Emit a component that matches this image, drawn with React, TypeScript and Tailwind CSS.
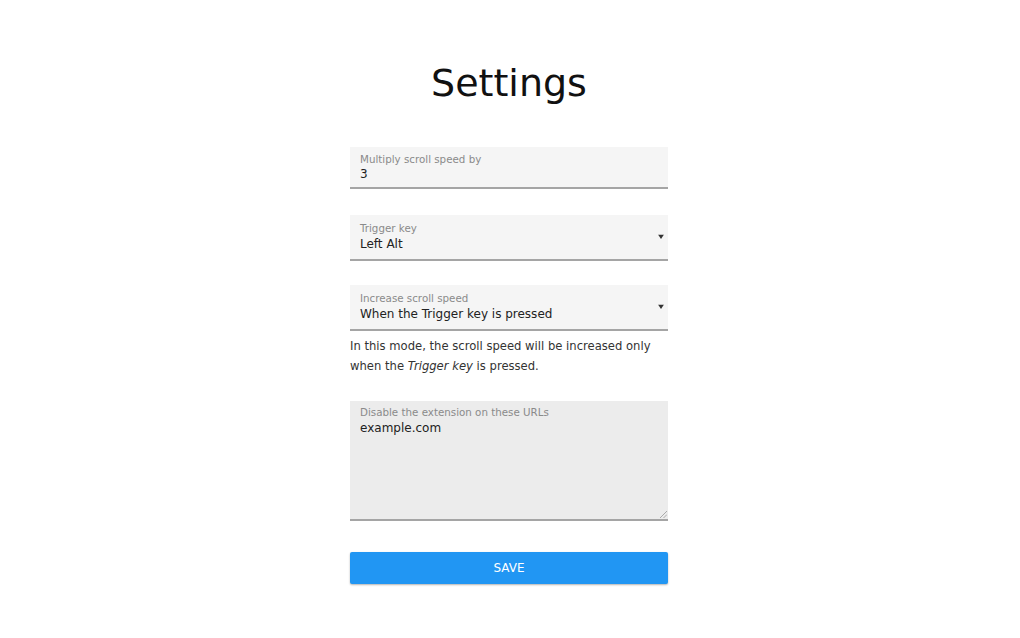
import React from "react";

function Arrow() {
  return (
    <svg width="6" height="5" viewBox="0 0 6 5" className="absolute right-[4px] top-1/2 -translate-y-1/2">
      <path d="M0 0 L6 0 L3 4.5 Z" fill="#333" />
    </svg>
  );
}

export default function App() {
  return (
    <div className="min-h-[638px] w-full bg-white pr-[2px]" style={{ fontFamily: '"DejaVu Sans", sans-serif' }}>
      <div className="mx-auto flex w-[318px] flex-col pt-[62px]">
        <h1 className="text-center text-[38px] leading-[43px] text-[#111]">Settings</h1>

        <div className="mt-[42px] h-[42px] border-b-2 border-[#a5a5a5] bg-[#f5f5f5] px-[10px] pt-[6px]">
          <div className="text-[10.3px] leading-[12px] text-[#8a8a8a]">Multiply scroll speed by</div>
          <div className="mt-[1px] text-[12px] leading-[16px] text-[#222]">3</div>
        </div>

        <div className="relative mt-[26px] h-[46px] border-b-2 border-[#a5a5a5] bg-[#f5f5f5] px-[10px] pt-[7px]">
          <div className="text-[10.3px] leading-[12px] text-[#8a8a8a]">Trigger key</div>
          <div className="mt-[2px] text-[12px] leading-[16px] text-[#222]">Left Alt</div>
          <Arrow />
        </div>

        <div className="relative mt-[24px] h-[46px] border-b-2 border-[#a5a5a5] bg-[#f5f5f5] px-[10px] pt-[7px]">
          <div className="text-[10.3px] leading-[12px] text-[#8a8a8a]">Increase scroll speed</div>
          <div className="mt-[2px] text-[12px] leading-[16px] text-[#222]">When the Trigger key is pressed</div>
          <Arrow />
        </div>

        <p className="mt-[5px] text-[11.6px] leading-[20px] text-[#333]">
          In this mode, the scroll speed will be increased only
          <br />
          when the <em>Trigger key</em> is pressed.
        </p>

        <div className="relative mt-[25px] h-[120px] border-b-2 border-[#a5a5a5] bg-[#ececec] px-[10px] pt-[5px]">
          <div className="text-[10.3px] leading-[12px] text-[#8a8a8a]">Disable the extension on these URLs</div>
          <div className="mt-[2px] text-[12px] leading-[16px] text-[#222]">example.com</div>
          <svg width="7" height="7" viewBox="0 0 7 7" className="absolute bottom-[1px] right-[1px]">
            <path d="M7 0 L0 7 M7 3.5 L3.5 7" stroke="#aaa" strokeWidth="1" />
          </svg>
        </div>

        <button className="mt-[31px] h-[32px] w-full rounded-[2px] bg-[#2196f3] text-[12px] text-white shadow-[0_1px_2px_rgba(0,0,0,0.3)]">
          SAVE
        </button>
      </div>
    </div>
  );
}
